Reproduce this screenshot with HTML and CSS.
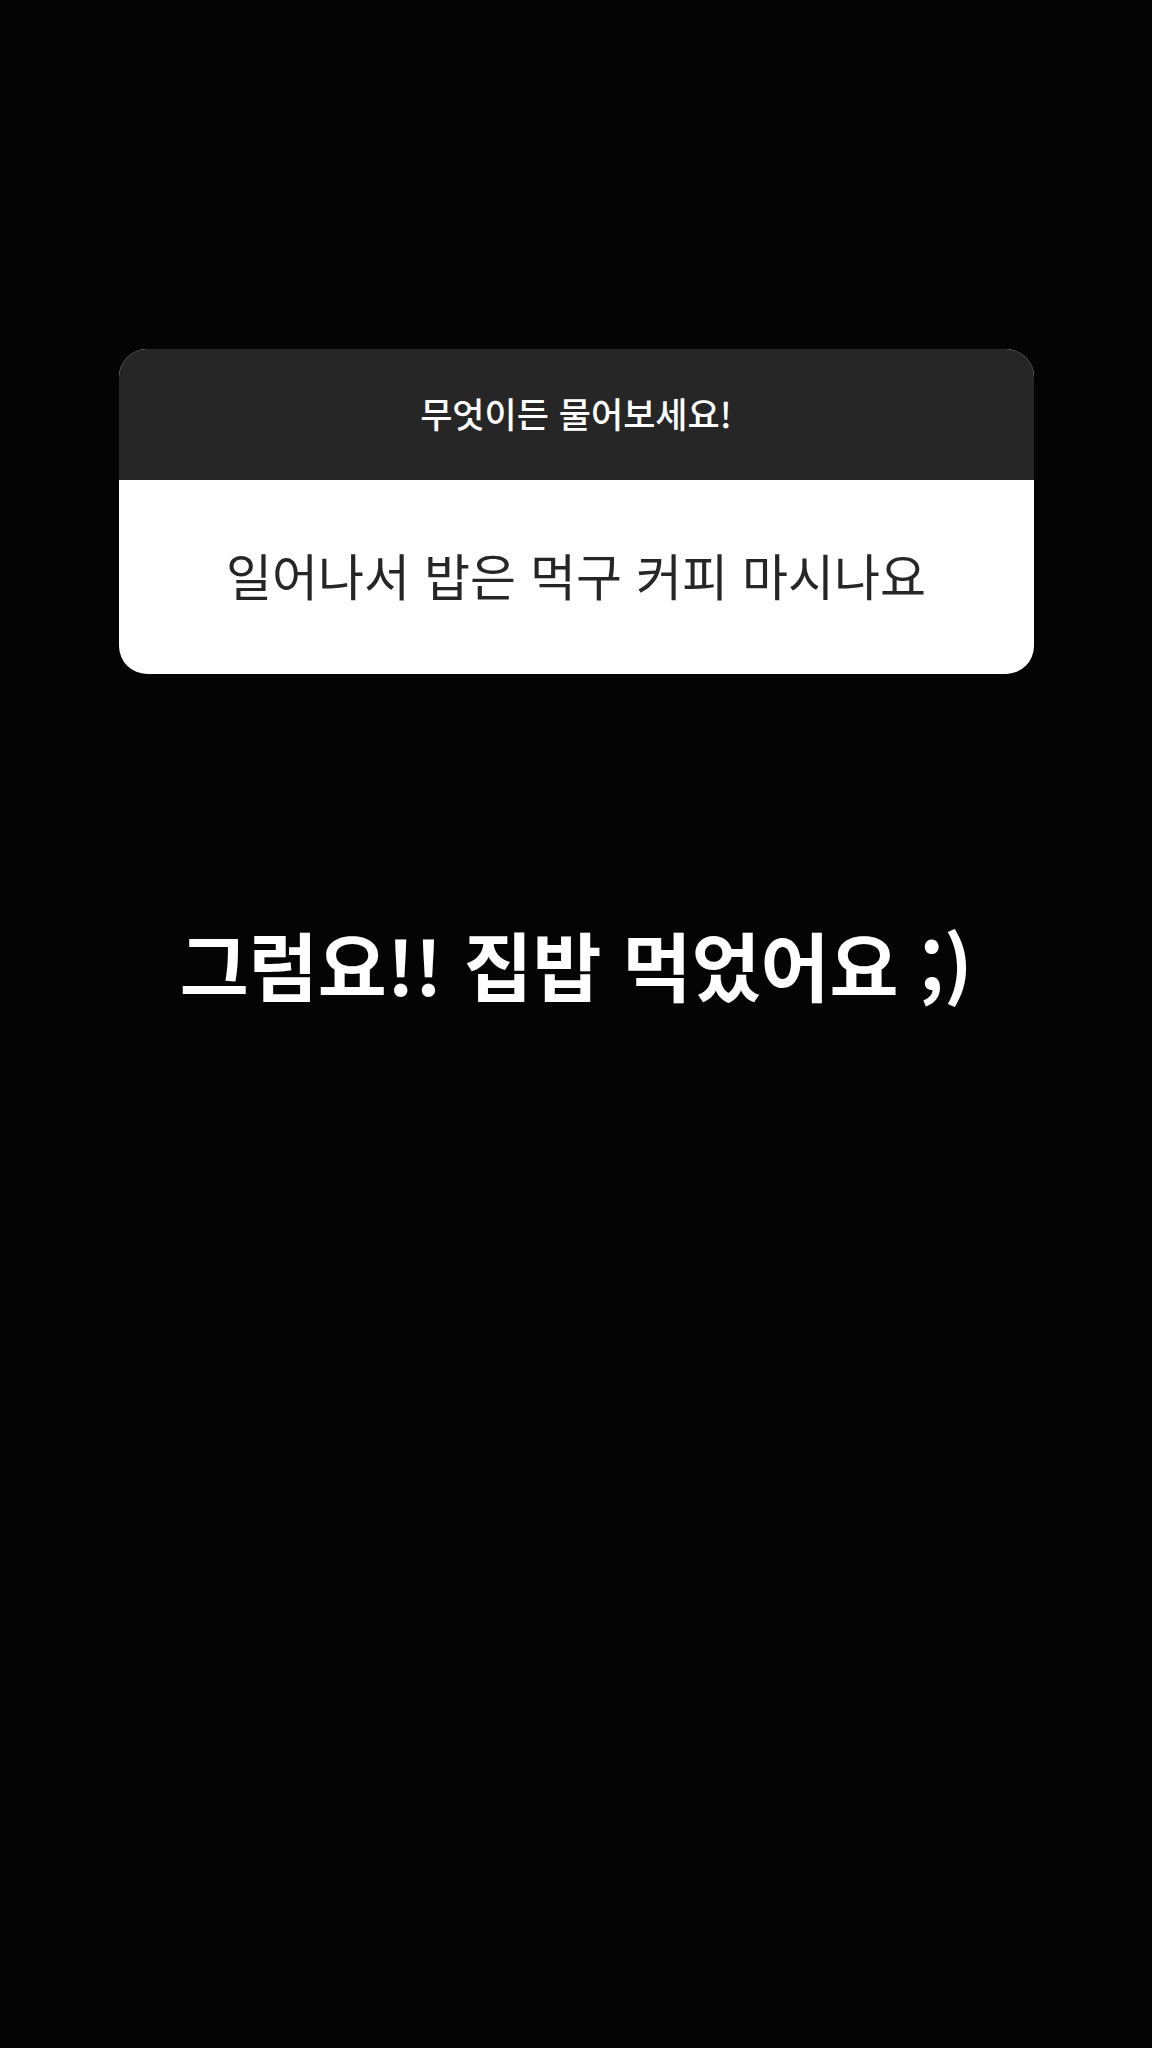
FILE: index.html
```html
<!DOCTYPE html>
<html lang="ko">
<head>
    <meta charset="UTF-8">
    <meta name="viewport" content="width=device-width, initial-scale=1.0">
    <title>Story</title>
    <link rel="stylesheet" href="styles.css">
</head>
<body>

<div class="story">
    <div class="question-card">
        <div class="question-header">무엇이든 물어보세요!</div>
        <div class="question-body">일어나서 밥은 먹구 커피 마시나요</div>
    </div>

    <p class="answer">그럼요!! 집밥 먹었어요 ;)</p>
</div>

</body>
</html>
```

FILE: styles.css
```css
body {
    font-family: "Noto Sans CJK KR", "Noto Sans", sans-serif;
    margin: 0;
    padding: 0;
    background-color: #040404;
    min-height: 2048px;
}

.story {
    display: flex;
    flex-direction: column;
    align-items: center;
    padding-top: 349px;
}

.question-card {
    width: 915px;
    border-radius: 28px;
    overflow: hidden;
    background-color: #fff;
}

.question-header {
    height: 131px;
    display: flex;
    align-items: center;
    justify-content: center;
    background-color: #262626;
    color: #fff;
    font-size: 35px;
    font-weight: 500;
    padding-bottom: 5px;
    box-sizing: border-box;
}

.question-body {
    height: 194px;
    display: flex;
    align-items: center;
    justify-content: center;
    color: #262626;
    font-size: 50px;
    font-weight: 400;
    padding-bottom: 6px;
    box-sizing: border-box;
}

.answer {
    margin: 240px 0 0;
    color: #fff;
    font-size: 75px;
    font-weight: 700;
    line-height: 100px;
}
```
